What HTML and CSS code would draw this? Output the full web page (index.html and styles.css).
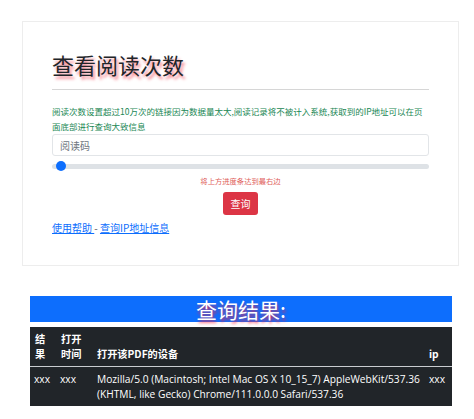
FILE: index.html
```html
<!DOCTYPE html>
<html lang="zh-CN">
<head>
<meta charset="utf-8">
<title>查看阅读次数</title>
<link rel="stylesheet" href="styles.css">
</head>
<body>
<div class="card">
  <h1 class="title">查看阅读次数</h1>
  <hr class="rule">
  <p class="notice">阅读次数设置超过10万次的链接因为数据量太大,阅读记录将不被计入系统,获取到的IP地址可以在页面底部进行查询大致信息</p>
  <input class="code-input" type="text" placeholder="阅读码">
  <input class="slider" type="range" min="0" max="100" value="1">
  <p class="hint">将上方进度条达到最右边</p>
  <div class="btn-row"><button class="btn-query">查询</button></div>
  <p class="links"><a href="#">使用帮助 </a> - <a href="#">查询IP地址信息</a></p>
</div>

<div class="results">
  <div class="result-bar">查询结果:</div>
  <table class="result-table">
    <colgroup>
      <col class="c1"><col class="c2"><col class="c3"><col class="c4">
    </colgroup>
    <thead>
      <tr><th>结果</th><th>打开时间</th><th>打开该PDF的设备</th><th>ip</th></tr>
    </thead>
    <tbody>
      <tr><td>xxx</td><td>xxx</td><td>Mozilla/5.0 (Macintosh; Intel Mac OS X 10_15_7) AppleWebKit/537.36 (KHTML, like Gecko) Chrome/111.0.0.0 Safari/537.36</td><td>xxx</td></tr>
    </tbody>
  </table>
</div>
</body>
</html>
```

FILE: styles.css
```css
* { box-sizing: border-box; }
body {
  margin: 0;
  background: #fff;
  font-family: "Open Sans", "Noto Sans CJK SC", sans-serif;
  color: #212529;
}
.card {
  margin: 21px 15px 0 22px;
  border: 1px solid #ededed;
  padding: 29px 29px 30px 29px;
}
.title {
  margin: 0 0 12px;
  font-family: "Noto Sans CJK SC", sans-serif;
  font-weight: 400;
  font-size: 22px;
  line-height: 26px;
  color: #212529;
  text-shadow: 2px 3px 3px rgba(240, 40, 60, 0.6);
}
.rule {
  margin: 0 0 14px;
  border: 0;
  border-top: 1px solid #d6d6d6;
}
.notice {
  margin: 0;
  font-family: "Noto Sans CJK SC", sans-serif;
  font-size: 8.5px;
  line-height: 15px;
  color: #198754;
}
.code-input {
  display: block;
  width: 100%;
  height: 22px;
  margin: 0;
  padding: 0 7px;
  border: 1px solid #e2e5e8;
  border-radius: 3px;
  font-family: "Noto Sans CJK SC", sans-serif;
  font-size: 10px;
  color: #212529;
  background: #fff;
}
.code-input::placeholder { color: #6c757d; }
.slider {
  -webkit-appearance: none;
  appearance: none;
  display: block;
  width: 100%;
  height: 10px;
  margin: 5px 0 0;
  padding: 0;
  background: transparent;
}
.slider::-webkit-slider-runnable-track {
  height: 5px;
  border-radius: 3px;
  background: #dee2e6;
}
.slider::-webkit-slider-thumb {
  -webkit-appearance: none;
  width: 10px;
  height: 10px;
  margin-top: -2.5px;
  border-radius: 50%;
  background: #0d6efd;
  border: 0;
}
.hint {
  margin: 5px 0 0;
  text-align: center;
  font-family: "Noto Sans CJK SC", sans-serif;
  font-size: 7.3px;
  line-height: 11px;
  color: #e0605a;
}
.btn-row {
  display: flex;
  justify-content: center;
  margin-top: 5px;
}
.btn-query {
  width: 35px;
  height: 23px;
  padding: 0;
  border: 0;
  border-radius: 3px;
  background: #dc3545;
  color: #fff;
  font-family: "Noto Sans CJK SC", sans-serif;
  font-size: 10px;
}
.links {
  margin: 5px 0 0;
  font-family: "Noto Sans CJK SC", sans-serif;
  font-size: 10px;
  line-height: 15px;
  color: #555;
}
.links a { color: #0d6efd; text-decoration: underline; }

.results {
  margin: 30px 22px 0 30px;
}
.result-bar {
  height: 26px;
  background: #0d6efd;
  color: #fff;
  text-align: center;
  font-family: "Noto Sans CJK SC", sans-serif;
  font-size: 21px;
  line-height: 26px;
  text-shadow: 1px 3px 3px rgba(255, 30, 60, 0.75);
}
.result-table {
  width: 100%;
  margin-top: 5px;
  table-layout: fixed;
  border-collapse: collapse;
  background: #212529;
  color: #fff;
  font-family: "Open Sans", "Noto Sans CJK SC", sans-serif;
  font-size: 10.2px;
  line-height: 14.5px;
}
.c1 { width: 26px; }
.c2 { width: 36px; }
.c3 { width: 335px; }
.c4 { width: 25px; }
.result-table th, .result-table td {
  padding: 5px 4px 5px 5px;
  text-align: left;
}
.result-table th {
  vertical-align: bottom;
  font-weight: 700;
  font-family: "Noto Sans CJK SC", sans-serif;
  border-bottom: 1px solid #c9ccd0;
}
.result-table td { vertical-align: top; font-weight: 400; }
.result-table th:last-child, .result-table td:last-child { padding-left: 2px; padding-right: 0; }
.result-table td:first-child, .result-table td:nth-child(2) { padding-left: 4px; }
```
